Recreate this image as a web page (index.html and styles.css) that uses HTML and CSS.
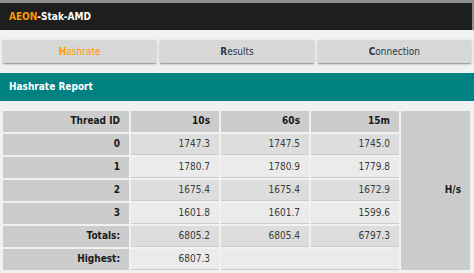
FILE: index.html
```html
<!DOCTYPE html>
<html lang="en">
<head>
    <meta charset="UTF-8">
    <meta name="viewport" content="width=device-width, initial-scale=1.0">
    <title>AEON-Stak-AMD</title>
    <link rel="stylesheet" href="styles.css">
</head>
<body>
    <div class="all">
        <div class="header"><span class="brand">AEON</span>-Stak-AMD</div>

        <div class="flex-container">
            <div class="flex-item"><div class="links active"><span class="letter">H</span>ashrate</div></div>
            <div class="flex-item"><div class="links"><span class="letter">R</span>esults</div></div>
            <div class="flex-item"><div class="links"><span class="letter">C</span>onnection</div></div>
        </div>

        <h4>Hashrate Report</h4>

        <div class="data">
            <table>
                <tr><th class="col-id">Thread ID</th><th class="col-num">10s</th><th class="col-num">60s</th><th class="col-num">15m</th><th rowspan="7" class="unit">H/s</th></tr>
                <tr><th>0</th><td>1747.3</td><td>1747.5</td><td>1745.0</td></tr>
                <tr><th>1</th><td>1780.7</td><td>1780.9</td><td>1779.8</td></tr>
                <tr><th>2</th><td>1675.4</td><td>1675.4</td><td>1672.9</td></tr>
                <tr><th>3</th><td>1601.8</td><td>1601.7</td><td>1599.6</td></tr>
                <tr><th>Totals:</th><td>6805.2</td><td>6805.4</td><td>6797.3</td></tr>
                <tr><th>Highest:</th><td>6807.3</td><td colspan="2"></td></tr>
            </table>
        </div>
    </div>
</body>
</html>
```

FILE: styles.css
```css
body {
    margin: 0;
    font-family: "DejaVu Sans Condensed", "DejaVu Sans", sans-serif;
    font-stretch: condensed;
    font-size: 10px;
    background-color: #f1f1f1;
    color: #2c3742;
}
.header {
    display: flex;
    align-items: center;
    height: 27px;
    padding: 0 9px;
    background-color: #1e1e1e;
    color: white;
    font-weight: bold;
    border-top: 3px solid #8f8f8f;
    border-right: 2px solid #8f8f8f;
    margin-bottom: 10px;
}
.brand {
    color: #ff9900;
}
.flex-container {
    display: flex;
    gap: 4px;
    padding: 0 3px;
}
.flex-item {
    flex: 1;
}
.links {
    height: 23px;
    line-height: 23px;
    text-align: center;
    background-color: #d7d7d7;
    color: #2c3742;
    box-shadow: 0px 1px 3px 0px rgba(0, 0, 0, 0.2), 0px 1px 1px 0px rgba(0, 0, 0, 0.14), 0px 2px 1px -1px rgba(0, 0, 0, 0.12);
}
.links.active {
    color: #ff9900;
}
.letter {
    font-weight: bold;
}
h4 {
    height: 28px;
    line-height: 28px;
    margin: 10px 0 8px;
    padding: 0 9px;
    background-color: #008282;
    color: white;
    font-size: 10px;
}
.data table {
    width: 471px;
    margin-left: 1px;
    border-spacing: 2px;
}
.data th, .data td {
    height: 20px;
    padding: 0 9px;
    text-align: right;
    border-bottom: 1px solid #cccccc;
    line-height: 20px;
}
.data td {
    color: #3a3a3a;
}
.data th {
    background-color: #cccccc;
    color: #1a1a1a;
}
.data tr:nth-child(even) td {
    background-color: #dddddd;
}
.data tr:nth-child(odd) td {
    background-color: #ebebeb;
}
.col-id {
    width: 108px;
}
.col-num {
    width: 70px;
}
.unit {
    width: 51px;
}
```
